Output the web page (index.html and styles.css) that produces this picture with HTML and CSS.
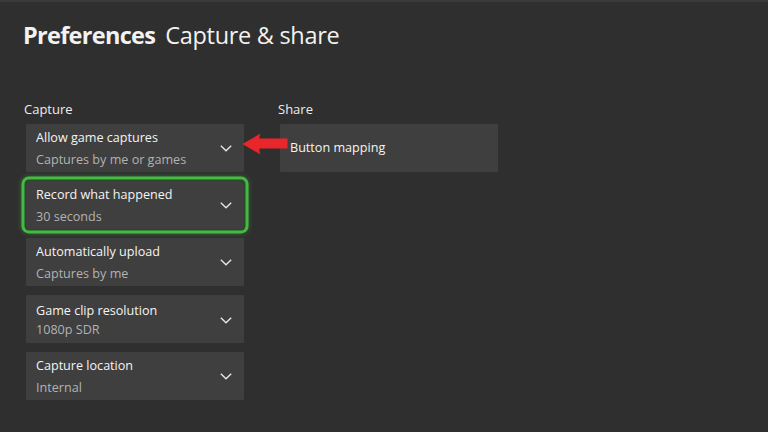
FILE: index.html
```html
<!DOCTYPE html>
<html lang="en">
<head>
<meta charset="utf-8">
<title>Preferences - Capture &amp; share</title>
<link rel="stylesheet" href="styles.css">
</head>
<body>
<div class="screen">
  <h1 class="header"><span class="crumb">Preferences</span><span class="page">Capture &amp; share</span></h1>
  <div class="columns">
    <section class="column">
      <h2 class="label">Capture</h2>
      <div class="list">
        <div class="card">
          <div class="texts"><div class="title">Allow game captures</div><div class="sub">Captures by me or games</div></div>
          <svg class="chev" viewBox="0 0 12 7"><path d="M0.8 0.8 L6 5.8 L11.2 0.8"/></svg>
        </div>
        <div class="card focused">
          <div class="texts"><div class="title">Record what happened</div><div class="sub">30 seconds</div></div>
          <svg class="chev" viewBox="0 0 12 7"><path d="M0.8 0.8 L6 5.8 L11.2 0.8"/></svg>
        </div>
        <div class="card">
          <div class="texts"><div class="title">Automatically upload</div><div class="sub">Captures by me</div></div>
          <svg class="chev" viewBox="0 0 12 7"><path d="M0.8 0.8 L6 5.8 L11.2 0.8"/></svg>
        </div>
        <div class="card compact">
          <div class="texts"><div class="title">Game clip resolution</div><div class="sub">1080p SDR</div></div>
          <svg class="chev" viewBox="0 0 12 7"><path d="M0.8 0.8 L6 5.8 L11.2 0.8"/></svg>
        </div>
        <div class="card">
          <div class="texts"><div class="title">Capture location</div><div class="sub">Internal</div></div>
          <svg class="chev" viewBox="0 0 12 7"><path d="M0.8 0.8 L6 5.8 L11.2 0.8"/></svg>
        </div>
      </div>
    </section>
    <section class="column share">
      <h2 class="label">Share</h2>
      <div class="card single"><div class="title">Button mapping</div></div>
    </section>
  </div>
  <svg class="arrow" viewBox="0 0 46 22"><path d="M0.5 11 L18.5 0.5 Q17 4 17.5 5.5 L45.5 5.5 L45.5 15.5 L17.5 15.5 Q17 18 18.5 21.5 Z"/></svg>
</div>
</body>
</html>
```
FILE: styles.css
```css
html, body {
  margin: 0;
  padding: 0;
}
body {
  background: #2f2f2f;
  font-family: "Open Sans", "Noto Sans", sans-serif;
  color: #f2f2f2;
  width: 768px;
  height: 432px;
  overflow: hidden;
}
.screen {
  position: relative;
  width: 768px;
  height: 432px;
  box-sizing: border-box;
  border-top: 2px solid #3a3a39;
  padding: 15px 0 0 23px;
}
.header {
  margin: 0;
  font-size: 23.5px;
  line-height: 36px;
  font-weight: 400;
  display: flex;
  gap: 10px;
}
.crumb { font-weight: 700; letter-spacing: -0.7px; }
.page { letter-spacing: -0.3px; }
.columns {
  display: flex;
  gap: 36px;
  margin-top: 47px;
}
.column {
  width: 218px;
  padding-left: 3px;
}
.column.share { padding-left: 0; width: 218px; }
.label {
  margin: 0 0 6px -2px;
  font-size: 13px;
  font-weight: 400;
  line-height: 18px;
  color: #ececec;
}
.list {
  display: flex;
  flex-direction: column;
  gap: 9px;
}
.card {
  background: #3f3f3f;
  height: 48px;
  box-sizing: border-box;
  padding: 4px 12px 0 10px;
  display: flex;
  align-items: flex-start;
  justify-content: space-between;
  border-radius: 1px;
}
.title {
  font-size: 12.6px;
  line-height: 20px;
  color: #f4f4f4;
}
.sub {
  font-size: 12.6px;
  line-height: 23px;
  color: #b2b2b2;
}
.compact { padding-top: 6px; }
.compact .sub { line-height: 17px; }
.chev {
  width: 12px;
  height: 7px;
  align-self: center;
  margin-top: -3px;
  fill: none;
  stroke: #e6e6e6;
  stroke-width: 1.4;
}
.focused {
  box-shadow: 0 0 0 1.5px #264a26, 0 0 0 4.5px #44b944, 0 0 5px 5px rgba(70, 190, 70, 0.35);
  border-radius: 3px;
}
.single {
  align-items: center;
  padding: 0 10px;
}
.arrow {
  position: absolute;
  left: 242px;
  top: 131px;
  width: 46px;
  height: 22px;
  fill: #e8262b;
}
```
